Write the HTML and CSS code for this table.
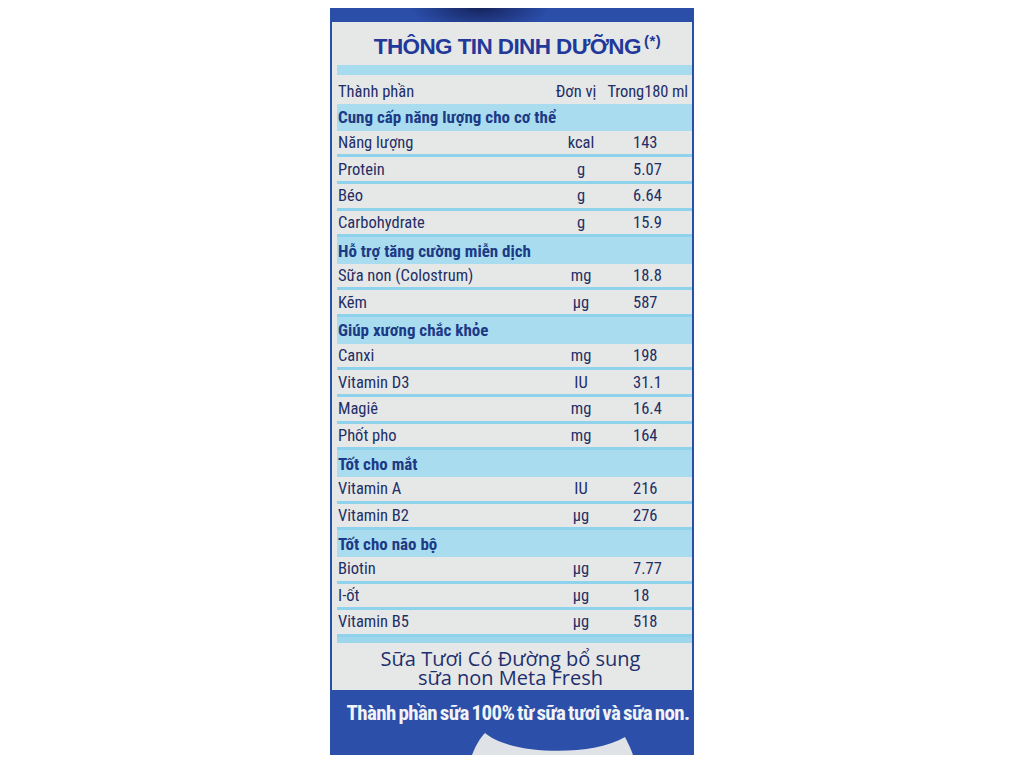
FILE: index.html
```html
<!DOCTYPE html>
<html lang="vi">
<head>
<meta charset="utf-8">
<title>Thông tin dinh dưỡng</title>
<link rel="stylesheet" href="styles.css">
</head>
<body>
<div class="carton">
  <div class="top-band"></div>
  <div class="panel">
    <div class="title">THÔNG TIN DINH DƯỠNG<sup>(*)</sup></div>
    <div class="bar"></div>
    <div class="head">
      <span>Thành phần</span>
      <span class="c">Đơn vị</span>
      <span class="r">Trong180 ml</span>
    </div>
    <div class="table">
      <div class="sec">Cung cấp năng lượng cho cơ thể</div>
      <div class="row"><span>Năng lượng</span><span class="u">kcal</span><span class="v">143</span></div>
      <div class="row"><span>Protein</span><span class="u">g</span><span class="v">5.07</span></div>
      <div class="row"><span>Béo</span><span class="u">g</span><span class="v">6.64</span></div>
      <div class="row"><span>Carbohydrate</span><span class="u">g</span><span class="v">15.9</span></div>
      <div class="sec">Hỗ trợ tăng cường miễn dịch</div>
      <div class="row"><span>Sữa non (Colostrum)</span><span class="u">mg</span><span class="v">18.8</span></div>
      <div class="row"><span>Kẽm</span><span class="u">µg</span><span class="v">587</span></div>
      <div class="sec">Giúp xương chắc khỏe</div>
      <div class="row"><span>Canxi</span><span class="u">mg</span><span class="v">198</span></div>
      <div class="row"><span>Vitamin D3</span><span class="u">IU</span><span class="v">31.1</span></div>
      <div class="row"><span>Magiê</span><span class="u">mg</span><span class="v">16.4</span></div>
      <div class="row"><span>Phốt pho</span><span class="u">mg</span><span class="v">164</span></div>
      <div class="sec">Tốt cho mắt</div>
      <div class="row"><span>Vitamin A</span><span class="u">IU</span><span class="v">216</span></div>
      <div class="row"><span>Vitamin B2</span><span class="u">µg</span><span class="v">276</span></div>
      <div class="sec">Tốt cho não bộ</div>
      <div class="row"><span>Biotin</span><span class="u">µg</span><span class="v">7.77</span></div>
      <div class="row"><span>I-ốt</span><span class="u">µg</span><span class="v">18</span></div>
      <div class="row"><span>Vitamin B5</span><span class="u">µg</span><span class="v">518</span></div>
    </div>
    <div class="endbar"></div>
    <div class="product">
      <div class="pline">Sữa Tươi Có Đường bổ sung</div>
      <div class="pline">sữa non Meta Fresh</div>
    </div>
  </div>
  <div class="bottom-band">
    <div class="claim">Thành phần sữa 100% từ sữa tươi và sữa non.</div>
    <svg class="wave" width="364" height="22" viewBox="0 0 364 22" aria-hidden="true">
      <path d="M142 22 C146 12 150 5 155 0 C180 22 262 24 295 4 C298 10 301 16 303 22 Z" fill="#dfe2e6"/>
    </svg>
  </div>
</div>
</body>
</html>
```

FILE: styles.css
```css
html, body {
  margin: 0;
  padding: 0;
  background: #ffffff;
}

.carton {
  margin: 8px 0 0 330px;
  width: 364px;
  height: 747px;
  background: #2b4ea9;
  display: flex;
  flex-direction: column;
  overflow: hidden;
}

.top-band {
  height: 14px;
  flex: none;
  background:
    radial-gradient(ellipse 70px 22px at 150px 0px, rgba(18, 28, 80, 0.85), rgba(18, 28, 80, 0) 100%),
    #2b4ea9;
}

.panel {
  margin: 0 2px;
  height: 668px;
  flex: none;
  background: #e6e8e7;
  display: flex;
  flex-direction: column;
  padding-left: 5px;
  color: #232e66;
  font-family: "Liberation Sans Narrow", "Roboto Condensed", "DejaVu Sans Condensed", "Liberation Sans", sans-serif;
}

.title {
  height: 42px;
  flex: none;
  padding: 12px 0 0 6px;
  box-sizing: border-box;
  text-align: center;
  font-family: "Liberation Sans", Arial, sans-serif;
  font-weight: bold;
  font-size: 22.5px;
  line-height: 26px;
  color: #22399a;
  letter-spacing: -0.6px;
  white-space: nowrap;
}

.title sup {
  font-size: 15px;
  vertical-align: 8px;
  line-height: 0;
  margin-left: 3px;
  letter-spacing: 0.5px;
}

.bar {
  height: 10px;
  flex: none;
  margin-top: 1px;
  background: #a7dcef;
}

.head {
  height: 29px;
  flex: none;
  padding-top: 6px;
  box-sizing: border-box;
  display: grid;
  grid-template-columns: 213px 50px 1fr;
  font-size: 16.5px;
  line-height: 22px;
  padding-left: 1px;
}

.head .c { text-align: center; }
.head .r { text-align: right; padding-right: 4px; letter-spacing: -0.1px; }

.table {
  display: flex;
  flex-direction: column;
  flex: none;
}

.row, .sec {
  height: 26.65px;
  flex: none;
  box-sizing: border-box;
  font-size: 16.5px;
  padding-left: 1px;
}

.row {
  display: grid;
  grid-template-columns: 213px 60px 1fr;
  align-items: center;
  border-bottom: 3px solid #8fd2ec;
}

.row .u { text-align: center; }
.row .v { padding-left: 22px; }

.sec {
  background: #a9dcef;
  font-weight: bold;
  font-size: 17px;
  color: #1c3a85;
  display: flex;
  align-items: center;
}

.endbar {
  height: 6px;
  flex: none;
  background: #9ed7ec;
}

.product {
  padding: 6px 8px 0 0;
  text-align: center;
  font-family: "Open Sans", "Liberation Sans", sans-serif;
  font-size: 20px;
  color: #1e2f6e;
}

.pline {
  line-height: 19px;
  height: 19px;
  white-space: nowrap;
}

.bottom-band {
  flex: 1;
  display: flex;
  flex-direction: column;
  padding-top: 11px;
  background: #2c4faa;
}

.claim {
  height: 24px;
  text-align: center;
  color: #f1f3f6;
  font-family: "Liberation Sans Narrow", "Roboto Condensed", "Liberation Sans", sans-serif;
  font-weight: bold;
  font-size: 21px;
  line-height: 24px;
  letter-spacing: -0.6px;
  word-spacing: -1.5px;
  white-space: nowrap;
  padding-left: 12px;
}

.wave {
  display: block;
  margin-top: 8px;
}
```
